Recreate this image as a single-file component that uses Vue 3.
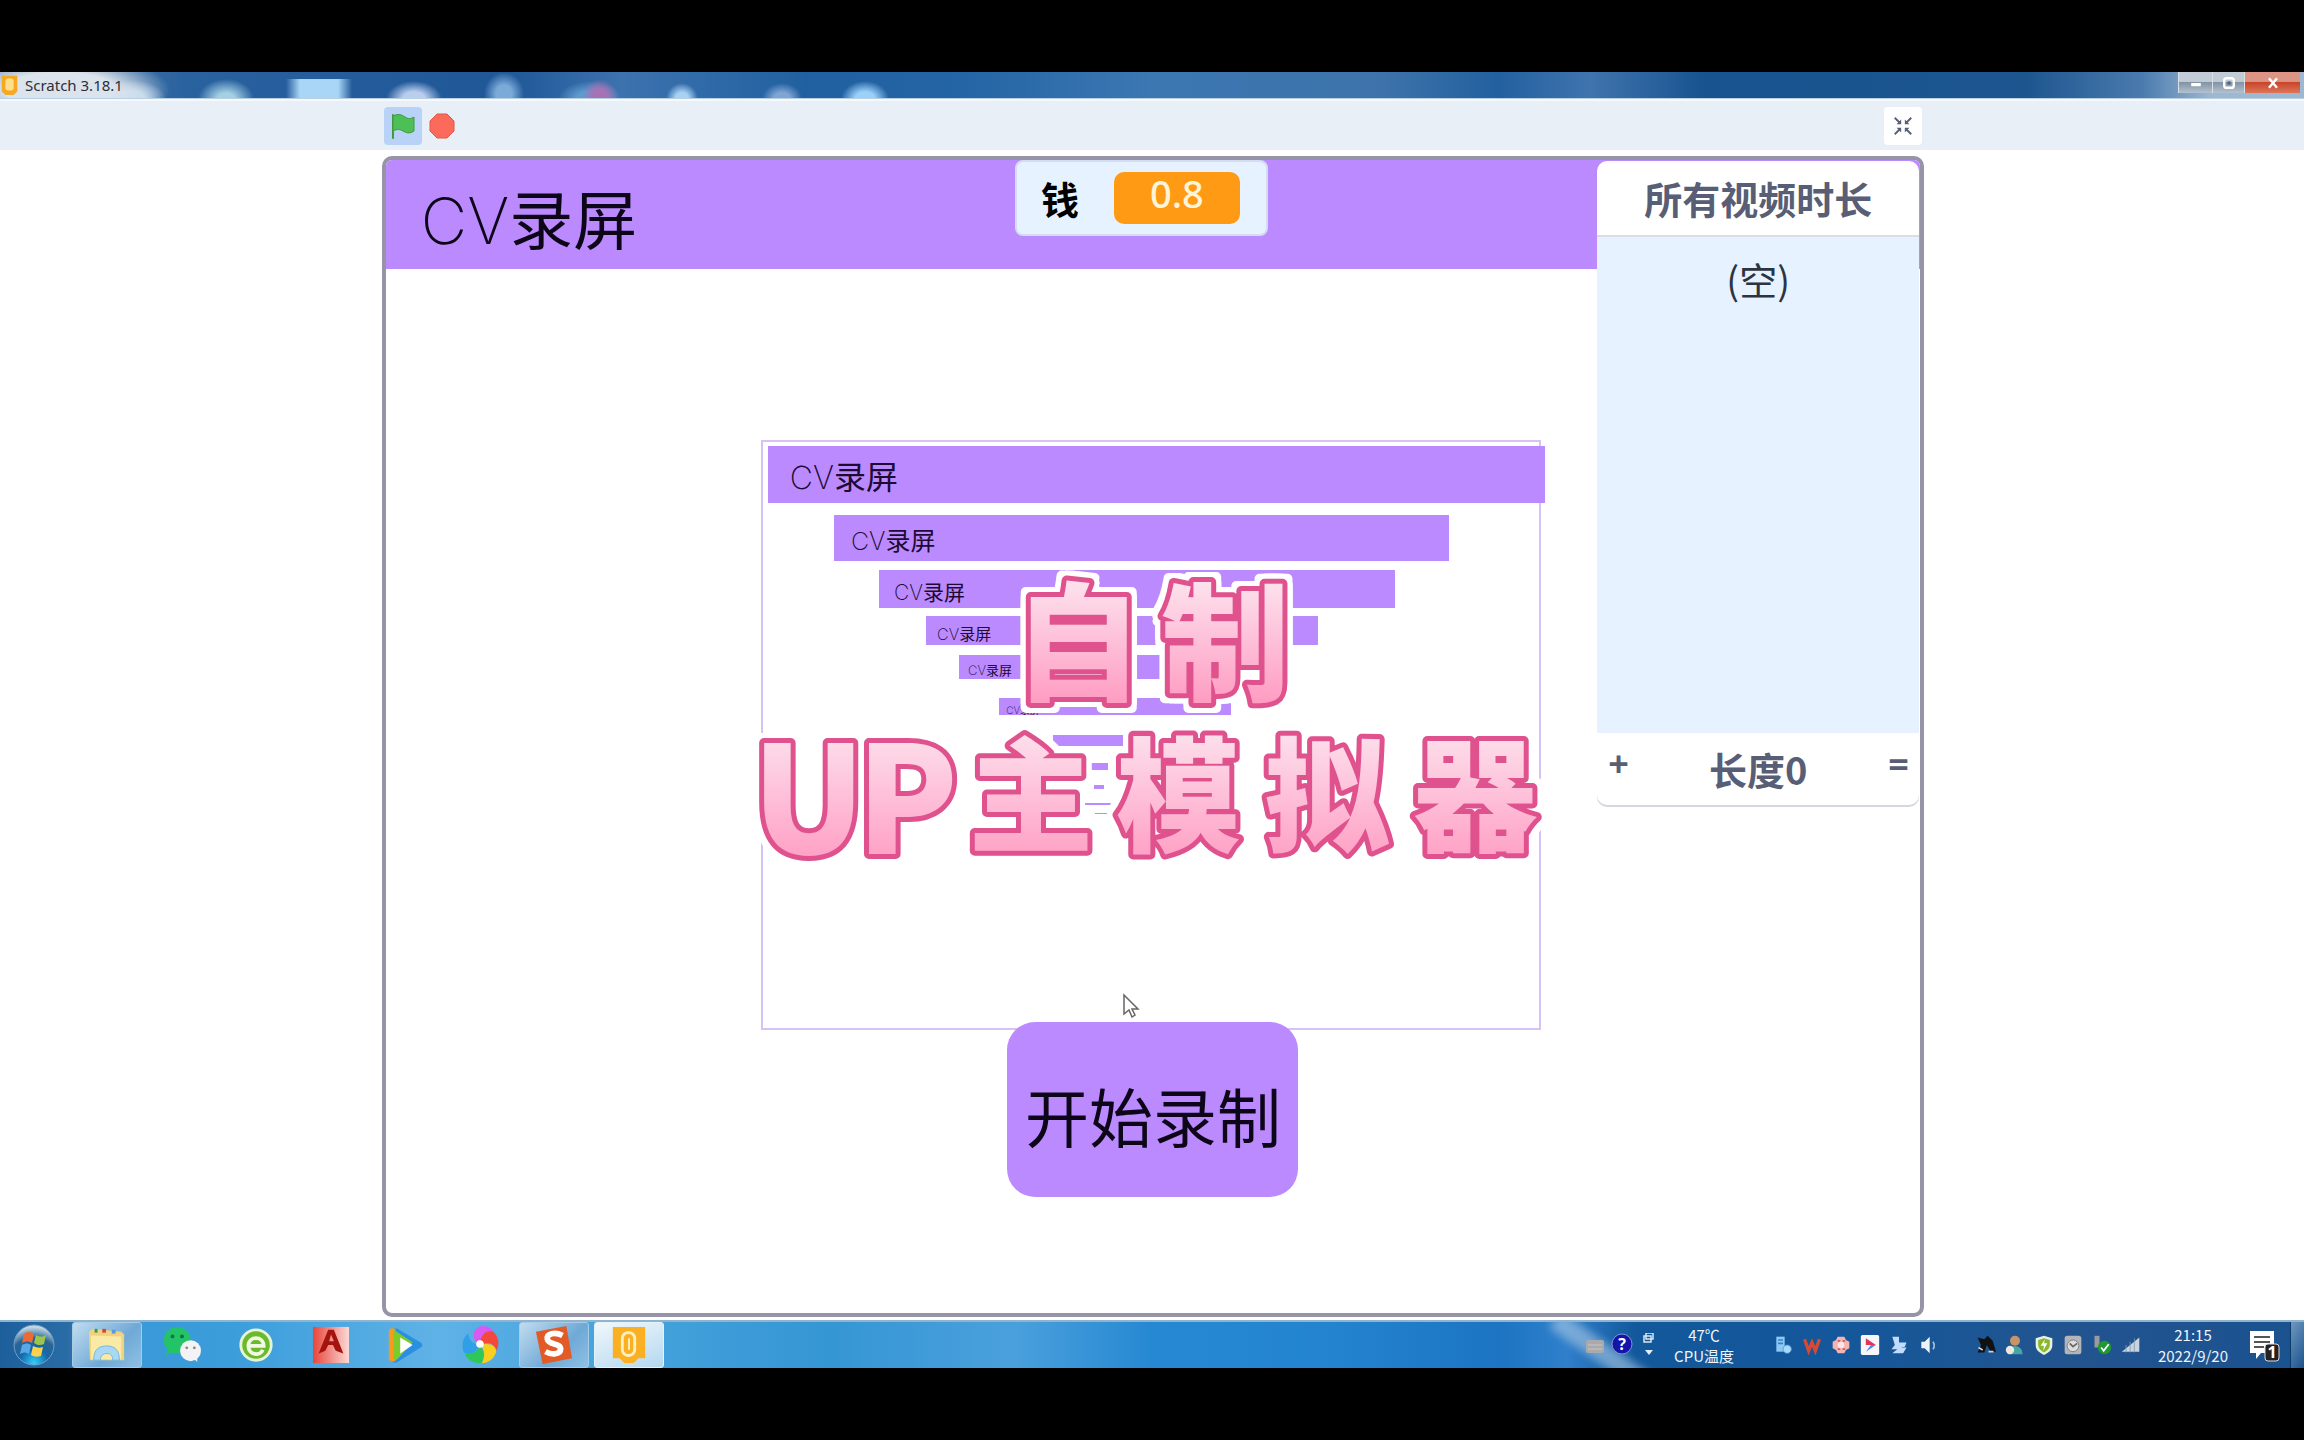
<script setup>
const FRAME = 775
const bars = [
  { left: 5, width: 776, gap: 4, height: 57, size: 32, pad: 22, label: true },
  { left: 71, width: 614, gap: 12, height: 46, size: 25, pad: 17, label: true },
  { left: 116, width: 515, gap: 9, height: 38, size: 21, pad: 15, label: true },
  { left: 163, width: 391, gap: 8, height: 29, size: 16, pad: 11, label: true },
  { left: 196, width: 318, gap: 10, height: 24, size: 13, pad: 9, label: true },
  { left: 236, width: 232, gap: 19, height: 17, size: 10, pad: 7, label: true },
  { left: 290, width: 72, gap: 20, height: 11 },
  { left: 327, width: 18, gap: 17, height: 7 },
  { left: 331, width: 10, gap: 15, height: 4 },
  { left: 322, width: 30, gap: 14, height: 2 },
  { left: 332, width: 12, gap: 8, height: 1 },
]
const barStyle = (b) => ({
  marginLeft: `${(b.left / FRAME) * 100}%`,
  width: `${(b.width / FRAME) * 100}%`,
  marginTop: `${b.gap}px`,
  height: `${b.height}px`,
  paddingLeft: `${b.pad || 0}px`,
  fontSize: `${b.size || 10}px`,
})
</script>

<template>
  <div class="screen">
    <header class="titlebar">
      <svg class="app-icon" viewBox="0 0 20 24"><path d="M1 2h17v17l-4 4H5l-4-4z" fill="#f7a823" /><rect x="5" y="5" width="9" height="13" rx="3" fill="#ffe08a" /></svg>
      <h1>Scratch 3.18.1</h1>
      <div class="captions">
        <button class="cap min" aria-label="Minimize"><svg viewBox="0 0 20 20"><rect x="4" y="10" width="12" height="4" fill="#fff" /></svg></button>
        <button class="cap max" aria-label="Maximize"><svg viewBox="0 0 20 20"><rect x="4" y="4" width="12" height="12" rx="3" fill="none" stroke="#fff" stroke-width="3" /><rect x="8" y="8" width="4" height="4" fill="#567" /></svg></button>
        <button class="cap close" aria-label="Close"><svg viewBox="0 0 20 20"><path d="M5 4l10 12M15 4L5 16" stroke="#fff" stroke-width="3" /></svg></button>
      </div>
    </header>

    <nav class="toolbar">
      <div class="column controls">
        <button class="flag" aria-label="Go"><svg viewBox="0 0 28 28"><path d="M4 3v23" stroke="#45993d" stroke-width="2" stroke-linecap="round" /><path d="M4 4c6-3 9-1 12 1s6 2 9 0v14c-4 3-8 2-11 0s-6-2-10 0z" fill="#4cbf56" stroke="#45993d" /></svg></button>
        <button class="stop" aria-label="Stop"><svg viewBox="0 0 26 26"><path d="M8 1h10l7 7v10l-7 7H8l-7-7V8z" fill="#fb6a5b" stroke="#e0574b" /></svg></button>
        <button class="shrink" aria-label="Exit full screen"><svg viewBox="0 0 24 24"><path d="M3 3l6 6M21 3l-6 6M3 21l6-6M21 21l-6-6" stroke="#575e75" stroke-width="2" /><path d="M10 5v5H5zM14 5v5h5zM10 19v-5H5zM14 19v-5h5z" fill="#575e75" /></svg></button>
      </div>
    </nav>

    <main class="workspace">
      <div class="column stage">
        <section class="banner"><span class="thin">CV</span>录屏</section>

        <div class="frame">
          <div v-for="(b, i) in bars" :key="i" class="bar" :style="barStyle(b)"><template v-if="b.label"><span class="thin">CV</span>录屏</template></div>
          <svg class="caption" viewBox="0 0 820 320">
            <defs>
              <linearGradient id="pink" x1="0" y1="0.2" x2="0" y2="0.9">
                <stop offset="0" stop-color="#fde3ee" />
                <stop offset="1" stop-color="#ff98c0" />
              </linearGradient>
            </defs>
            <text class="cartoon first" x="266 413" y="124">自制</text>
            <text class="cartoon"><tspan class="latin" x="5 109" y="286">UP</tspan><tspan x="221 368 516 664" y="274">主模拟器</tspan></text>
          </svg>
        </div>
        <button class="record">开始录制</button>

        <div class="monitor"><span class="name">钱</span><output class="value">0.8</output></div>

        <aside class="list">
          <h2>所有视频时长</h2>
          <div class="items">(空)</div>
          <footer><button aria-label="Add">+</button><span>长度0</span><button aria-label="Resize">=</button></footer>
        </aside>

        <svg class="pointer" viewBox="0 0 18 26"><path d="M2 2v19l5-4 3 7 3-2-3-6h6z" fill="#fff" stroke="#666" stroke-width="1.5" /></svg>
      </div>
    </main>

    <footer class="taskbar">
      <button class="start" aria-label="Start">
        <svg viewBox="0 0 44 44">
          <defs><radialGradient id="orb" cx=".5" cy=".95" r=".9"><stop offset="0" stop-color="#2fd0ff" /><stop offset=".4" stop-color="#1668a8" /><stop offset=".7" stop-color="#2a6492" /><stop offset="1" stop-color="#c2d8e6" /></radialGradient></defs>
          <circle cx="22" cy="22" r="20" fill="url(#orb)" stroke="#6f9fc4" />
          <path d="M12 11c4-3 7-2 10 0l-2 9c-4-2-6-2-10 0z" fill="#ec6a35" /><path d="M24 12c4 2 7 2 10 0l-2 9c-4 2-7 1-10-1z" fill="#9bc54d" />
          <path d="M10 22c4-2 6-2 9 0l-2 9c-3-2-6-2-9 0z" fill="#58a8e8" /><path d="M21 23c4 2 7 2 10 1l-2 9c-4 1-7 1-10-1z" fill="#ffd04a" />
        </svg>
      </button>
      <div class="tasks">
        <button class="task open" aria-label="Explorer">
          <svg viewBox="0 0 44 40"><path d="M3 6l4-3 30 3 3 3v27H4z" fill="#f0d37c" /><path d="M5 10l32 1v24H5z" fill="#fbe9a6" /><path d="M9 3h3v4H9z" fill="#3a9a4c" /><path d="M17 3h4v4h-4z" fill="#d24a3a" /><path d="M27 4h4v4h-4z" fill="#5a9ad8" /><path d="M8 36c0-12 6-15 14-15s13 4 13 15h-7c0-5-2-7-6-7s-7 2-7 7z" fill="#a8d8f4" stroke="#6ab6e4" /></svg>
        </button>
        <button class="task" aria-label="WeChat">
          <svg viewBox="0 0 44 40"><circle cx="17" cy="15" r="14" fill="#22c467" /><path d="M7 24l-2 7 7-4z" fill="#22c467" /><circle cx="12" cy="11" r="2" fill="#14713d" /><circle cx="22" cy="11" r="2" fill="#14713d" /><circle cx="31" cy="26" r="11" fill="#f3f3f5" /><path d="M34 34l4 4 0-7z" fill="#f3f3f5" /><circle cx="27" cy="23" r="1.5" fill="#888" /><circle cx="35" cy="23" r="1.5" fill="#888" /></svg>
        </button>
        <button class="task" aria-label="Browser">
          <svg viewBox="0 0 44 40"><circle cx="22" cy="20" r="16" fill="#6cb92d" stroke="#e4f5d4" stroke-width="3" /><path d="M14 21h16c0-11-16-11-16 0 0 10 13 11 15 4" fill="none" stroke="#eefbe0" stroke-width="4" /></svg>
        </button>
        <button class="task" aria-label="AutoCAD">
          <svg viewBox="0 0 44 40"><defs><linearGradient id="cad"><stop offset="0" stop-color="#e8453c" /><stop offset="1" stop-color="#fbd9d5" /></linearGradient></defs><rect x="3" y="1" width="38" height="38" fill="url(#cad)" /><path d="M9 29L19 4h6l10 25-8-3-3-6h-5l-3 6zM20 16h5l-3-7z" fill="#a3140c" fill-rule="evenodd" /></svg>
        </button>
        <button class="task" aria-label="Player">
          <svg viewBox="0 0 44 40"><path d="M8 6c0-4 3-4 6-3l24 14c3 2 3 4 0 6L14 38c-4 2-6 0-6-4z" fill="#2a8fe0" /><path d="M5 5c1-3 4-3 7-2v34c-4 1-6 0-7-3z" fill="#f79a1e" /><path d="M10 4l20 13-16 18c-2 2-4 0-4-3z" fill="#7ccb2a" /><path d="M17 12l13 8-13 9z" fill="#fff" /></svg>
        </button>
        <button class="task" aria-label="Video">
          <svg viewBox="0 0 44 40"><path d="M22 20C12 14 14 2 24 0c7 0 11 3 12 6-8 0-13 5-14 14z" fill="#d85af0" /><path d="M22 20c0-12 8-16 14-14 6 5 7 14 3 20-2-8-9-10-17-6z" fill="#f5483c" /><path d="M22 20c11-3 17 1 17 7-2 8-9 12-15 12 4-8 3-14-2-19z" fill="#f8cf1c" /><path d="M22 20c5 8 5 14 1 19-8 1-15-4-17-10 8 1 14-2 16-9z" fill="#2fc65a" /><path d="M22 20c-4 9-11 11-17 8-3-8-1-16 5-20 0 7 4 11 12 12z" fill="#2f9fe8" /><circle cx="22" cy="19" r="4" fill="#fff" /></svg>
        </button>
        <button class="task open" aria-label="Sogou">
          <svg viewBox="0 0 44 40"><path d="M3 6l32-6 6 34-31 6z" fill="#e25a26" /><path d="M31 10c-8-4-17-2-16 4s14 4 14 10-9 7-16 3" fill="none" stroke="#fff" stroke-width="6" /></svg>
        </button>
        <button class="task active" aria-label="Scratch">
          <svg viewBox="0 0 44 40"><path d="M5 1h34v33h-7l-5 5H17l-5-5H5z" fill="#fbb024" /><rect x="15" y="7" width="13" height="24" rx="6" fill="none" stroke="#fff0c0" stroke-width="3" /><path d="M22 13v12" stroke="#fff0c0" stroke-width="2" /></svg>
        </button>
      </div>

      <div class="lang">
        <svg viewBox="0 0 24 24"><rect x="3" y="7" width="18" height="13" rx="2" fill="#aaa9ab" /><path d="M5 12h14M5 16h14" stroke="#c6c6c8" /></svg>
        <svg viewBox="0 0 24 24"><circle cx="12" cy="11" r="10" fill="#1414a8" stroke="#8090d8" /><text x="12" y="17" text-anchor="middle" class="glyph">?</text></svg>
        <svg viewBox="0 0 24 24"><path d="M9 0h7v6H9zM7 3h7v6H7z" fill="none" stroke="#d7e6f2" stroke-width="1.5" /><path d="M8 17h8l-4 5z" fill="#e3eef6" /></svg>
      </div>
      <div class="readout temp"><span>47℃</span><span>CPU温度</span></div>
      <div class="tray">
        <svg viewBox="0 0 24 24"><path d="M4 2h10v18H4z" fill="#8ec9f5" /><path d="M6 6h6M6 10h6" stroke="#3b82c4" stroke-width="2" /><circle cx="17" cy="17" r="5" fill="#a8d8fa" stroke="#4c91cf" /></svg>
        <svg viewBox="0 0 24 24"><path d="M3 5l5 14 4-10 4 10 5-14" fill="none" stroke="#d44a34" stroke-width="4" /></svg>
        <svg viewBox="0 0 24 24"><path d="M8 2h8l2 4 4 2v8l-4 2-2 4H8l-2-4-4-2V8l4-2z" fill="#f3b4b4" /><circle cx="12" cy="12" r="4" fill="#fbe5e5" /><path d="M8 7h3M14 7h3M8 17h3M14 17h3" stroke="#d65b60" stroke-width="2" /></svg>
        <svg viewBox="0 0 24 24"><rect x="1" y="0" width="22" height="24" rx="2" fill="#f7f7fb" /><path d="M7 4l12 8H7z" fill="#e2335b" /><path d="M7 20l12-8h-6z" fill="#4689e4" /></svg>
        <svg viewBox="0 0 24 24"><path d="M4 2h8v7h9l-2 5-5 1h7l-4 7H4l6-5H3l4-5z" fill="#bfdcff" /></svg>
        <svg viewBox="0 0 24 24"><path d="M4 8h4l6-6v20l-6-6H4z" fill="#eef3f8" /><path d="M18 8c2 3 2 6 0 9" stroke="#a9c3da" stroke-width="2" fill="none" /></svg>
      </div>
      <div class="tray">
        <svg viewBox="0 0 24 24"><path d="M2 3l8 2 4-4 6 6 4 13h-6l-5-8-3 9H2l4-9z" fill="#111" /><path d="M3 15l5 3M15 20h6" stroke="#c8d4df" stroke-width="2" /></svg>
        <svg viewBox="0 0 24 24"><circle cx="12" cy="7" r="6" fill="#c89465" /><path d="M3 23c0-13 18-13 18 0z" fill="#4aa6a4" /><circle cx="6" cy="18" r="5" fill="#ece8df" /></svg>
        <svg viewBox="0 0 24 24"><path d="M12 1l10 3v8c0 6-4 9-10 12C6 21 2 18 2 12V4z" fill="#eaf0e2" /><path d="M12 4l7 2v6c0 4-3 7-7 9-4-2-7-5-7-9V6z" fill="#86b92b" /><path d="M13 5l-5 8h4l-1 6 5-9h-4z" fill="#fff" /></svg>
        <svg viewBox="0 0 24 24"><rect x="2" y="1" width="20" height="22" rx="3" fill="#b4b5b9" /><circle cx="12" cy="13" r="7" fill="#ddd" stroke="#777" /><path d="M8 10l4 4 5-4" stroke="#666" stroke-width="2" fill="none" /></svg>
        <svg viewBox="0 0 24 24"><path d="M3 1h6v14H3z" fill="#9a9ba1" /><circle cx="15" cy="15" r="8" fill="#1f9a32" /><path d="M11 15l3 4 6-8" stroke="#fff" stroke-width="2" fill="none" /></svg>
        <svg viewBox="0 0 24 24"><path d="M1 20L22 3v17z" fill="#c9d4dc" /><path d="M6 12v9M11 8v13M16 4v17" stroke="#7f9ab5" /></svg>
      </div>
      <div class="readout clock"><time>21:15</time><time>2022/9/20</time></div>
      <svg class="notice" viewBox="0 0 32 34"><path d="M1 3h24v22H12l-5 6v-6H1z" fill="#fff" /><path d="M5 9h16M5 14h16M5 19h10" stroke="#555" stroke-width="2" /><rect x="16" y="16" width="14" height="17" rx="3" fill="#222" stroke="#ddd" /><text x="23" y="30" text-anchor="middle" class="glyph">1</text></svg>
      <div class="desktop"></div>
    </footer>
  </div>
</template>

<style>
body {
  margin: 0;
  background: #000;
}
</style>

<style scoped>
.screen {
  box-sizing: border-box;
  min-height: 100vh;
  padding: 72px 0;
  display: flex;
  flex-direction: column;
  background: #000;
  font-family: "Noto Sans", "Noto Sans CJK SC", sans-serif;
}
button {
  border: 0;
  padding: 0;
  background: none;
  font: inherit;
  color: inherit;
}
svg {
  display: block;
}
.titlebar {
  box-sizing: border-box;
  height: 27px;
  display: flex;
  align-items: center;
  overflow: hidden;
  border-bottom: 1px solid #b9cfe2;
  background:
    radial-gradient(ellipse 110px 36px at 60px 18px, #dbe3ec 50%, transparent 100%),
    radial-gradient(ellipse 36px 18px at 130px 26px, #b9d6ec 40%, transparent 100%),
    radial-gradient(ellipse 28px 20px at 226px 27px, #a4d0e4 30%, transparent 100%),
    linear-gradient(90deg, transparent 286px, #a9d6f6 300px, #a9d6f6 338px, transparent 352px) 0 7px no-repeat,
    radial-gradient(ellipse 28px 18px at 414px 27px, #b9cdee 40%, transparent 100%),
    radial-gradient(ellipse 20px 22px at 504px 22px, #7ba9d8 40%, transparent 100%),
    radial-gradient(ellipse 18px 18px at 600px 25px, #a572b6 40%, transparent 100%),
    radial-gradient(ellipse 32px 18px at 590px 27px, #5e9cd0 40%, transparent 100%),
    radial-gradient(ellipse 16px 16px at 682px 27px, #a8d2f4 40%, transparent 100%),
    radial-gradient(ellipse 20px 16px at 782px 27px, #7fa5d2 40%, transparent 100%),
    radial-gradient(ellipse 24px 18px at 865px 27px, #9bd0fa 40%, transparent 100%),
    linear-gradient(90deg, #5f87ab 0, #2a62a0 8%, #1f5797 22%, #3c72ae 27%, #2160a0 35%, #2465a5 42%, #3c77b2 50%, #3d73aa 60%, #23609f 65%, #3f74ae 69%, #18538f 74%, #1d568f 88%, #4b7bae 93%, #9db8d2 96%);
}
.app-icon {
  width: 20px;
  height: 22px;
}
.titlebar h1 {
  flex: 1;
  margin: 0 0 0 5px;
  font-size: 15px;
  font-weight: 400;
  line-height: 20px;
  color: #2b2f38;
}
.captions {
  align-self: flex-start;
  display: flex;
  height: 21px;
  margin-right: 4px;
}
.cap {
  display: grid;
  place-items: center;
  background: linear-gradient(#c2ccd6 45%, #8494a5 50%, #b4c2cf);
  border-left: 1px solid #d9e0e8;
}
.cap svg {
  width: 16px;
  height: 16px;
}
.min {
  width: 34px;
}
.max {
  width: 32px;
}
.close {
  width: 56px;
  background: linear-gradient(#dc9585 45%, #c8452a 50%, #de7659);
}
.toolbar {
  height: 51px;
  border-top: 2px solid #f5f8fd;
  box-sizing: border-box;
  background: #e9eff6;
}
.column {
  box-sizing: border-box;
  width: 67%;
  margin: 0 auto;
}
.controls {
  display: flex;
  align-items: flex-start;
  gap: 7px;
  padding: 6px 2px 0 4px;
}
.flag,
.stop,
.shrink {
  display: grid;
  place-items: center;
  height: 38px;
  border-radius: 4px;
}
.flag {
  width: 38px;
  background: #b9d3f8;
}
.flag svg {
  width: 28px;
  height: 28px;
}
.stop svg {
  width: 26px;
  height: 26px;
}
.shrink {
  width: 38px;
  margin-left: auto;
  background: #fff;
}
.shrink svg {
  width: 22px;
  height: 22px;
}
.workspace {
  flex: 1;
  display: flex;
  padding: 6px 0 3px 2px;
  background: #fff;
}
.stage {
  position: relative;
  border: 4px solid #9694a6;
  border-radius: 10px;
}
.banner {
  height: 109px;
  padding-left: 35px;
  border-radius: 6px 6px 0 0;
  background: #bc8aff;
  color: #0d0518;
  font: 400 64px/122px Inter, "Noto Sans CJK SC", sans-serif;
}
.thin {
  font-weight: 200;
}
.frame {
  position: relative;
  box-sizing: border-box;
  width: 51%;
  max-width: 780px;
  height: 590px;
  margin: 171px 0 0 375px;
  border: 2px solid #d6c3f4;
}
.bar {
  box-sizing: border-box;
  display: flex;
  align-items: center;
  padding-top: 6px;
  background: #bc8aff;
  color: #1d0b35;
  font-family: Inter, "Noto Sans CJK SC", sans-serif;
  line-height: 1;
  white-space: nowrap;
}
.bar:nth-child(n + 7) {
  padding: 0;
}
.caption {
  position: absolute;
  top: 125px;
  left: -2%;
  width: 106%;
}
.cartoon {
  font: 900 124px "Noto Sans CJK SC", sans-serif;
  fill: url(#pink);
  stroke: #e0528d;
  stroke-width: 10px;
  stroke-linejoin: round;
  paint-order: stroke;
  filter: drop-shadow(5px 0 0 #fff) drop-shadow(-5px 0 0 #fff) drop-shadow(0 5px 0 #fff) drop-shadow(0 -5px 0 #fff);
}
.first {
  font-size: 128px;
}
.latin {
  font-size: 148px;
}
.record {
  display: block;
  position: relative;
  width: 291px;
  height: 175px;
  margin: -8px auto 0;
  padding-top: 8px;
  border-radius: 28px;
  background: #bc8aff;
  color: #0d0518;
  font: 400 64px/96px "Noto Sans CJK SC", sans-serif;
}
.monitor {
  position: absolute;
  top: 0;
  left: 41%;
  box-sizing: border-box;
  width: 253px;
  height: 76px;
  padding: 0 26px 0 24px;
  display: flex;
  align-items: center;
  justify-content: space-between;
  border: 2px solid #d3dcf0;
  border-radius: 8px;
  background: #e6f2ff;
}
.name {
  font: 700 38px/48px "Noto Sans CJK SC", sans-serif;
}
.value {
  width: 126px;
  height: 52px;
  border-radius: 10px;
  background: #ff9a14;
  color: #fff4d6;
  text-align: center;
  font: 500 38px/42px "Noto Sans", sans-serif;
}
.list {
  position: absolute;
  top: 1px;
  right: 1px;
  width: 322px;
  border-radius: 10px;
  background: #fff;
  box-shadow: 0 2px 0 #d4d7de;
  color: #575e75;
  text-align: center;
  font-family: "Noto Sans CJK SC", sans-serif;
}
.list h2 {
  margin: 0;
  border-bottom: 2px solid #d9dee6;
  font-size: 38px;
  font-weight: 700;
  line-height: 74px;
}
.items {
  box-sizing: border-box;
  height: 496px;
  padding-top: 18px;
  background: #e6f2ff;
  color: #2b3440;
  font-size: 38px;
  line-height: 48px;
}
.list footer {
  display: flex;
  align-items: flex-start;
  justify-content: space-between;
  padding: 0 11px;
  font-size: 38px;
  font-weight: 700;
  line-height: 72px;
}
.list footer button {
  width: 20px;
  display: grid;
  place-items: center;
  font: 700 36px/62px "Noto Sans", sans-serif;
}
.pointer {
  position: absolute;
  top: 833px;
  left: 48%;
  width: 18px;
  height: 26px;
}
.taskbar {
  position: relative;
  height: 48px;
  box-sizing: border-box;
  border-top: 2px solid #8fb4d0;
  display: flex;
  align-items: center;
  overflow: hidden;
  background: linear-gradient(90deg, #1c5f9b 0, #2a6ca6 3%, #3a97d6 4%, #3b9ddb 10%, #5fb2e6 19%, #49a5dd 25%, #3596d4 36%, #4aa0dc 44%, #2688d2 50%, #2383cf 58%, #1c74c2 65%, #2f7fcb 68%, #12589b 71%, #14579a 80%, #22548f 90%, #1a528f);
}
.taskbar::before {
  content: "";
  position: absolute;
  left: 69%;
  top: -26px;
  width: 20px;
  height: 110px;
  background: #a9c8e4;
  opacity: 0.6;
  filter: blur(4px);
  transform: rotate(-55deg);
}
.start {
  width: 68px;
  margin-right: 4px;
  display: grid;
  place-items: center;
}
.start svg {
  width: 44px;
  height: 44px;
}
.tasks {
  display: flex;
  width: 592px;
  justify-content: space-between;
}
.task {
  box-sizing: border-box;
  width: 70px;
  height: 46px;
  display: grid;
  place-items: center;
  border-radius: 3px;
}
.task svg {
  width: 42px;
  height: 38px;
}
.open {
  border: 1px solid #a8cbe6;
  background: linear-gradient(135deg, #c2dcf0, #6fa9d6 60%, #8ec0e4);
}
.active {
  border: 1px solid #e6f2fa;
  background: linear-gradient(160deg, #f0f7fc, #b5d8f0);
}
.lang,
.tray {
  position: relative;
  display: flex;
}
.lang {
  margin-left: auto;
  margin-right: 13px;
  gap: 3px;
}
.tray {
  margin-right: 36px;
  gap: 7px;
}
.lang svg {
  width: 24px;
  height: 24px;
}
.tray svg {
  width: 22px;
  height: 20px;
}
.glyph {
  fill: #fff;
  font: 700 16px "Noto Sans", sans-serif;
}
.readout {
  display: flex;
  flex-direction: column;
  align-items: center;
  color: #eef5fb;
  font: 400 15px/21px "Noto Sans CJK SC", sans-serif;
}
.temp {
  position: relative;
  margin-right: 38px;
}
.tray + .tray {
  margin-right: 13px;
}
.clock {
  width: 76px;
}
.notice {
  width: 32px;
  height: 34px;
  margin: 0 9px 0 18px;
}
.desktop {
  align-self: stretch;
  width: 13px;
  border-left: 1px solid #0d3a68;
  background: linear-gradient(120deg, #6d97bf, #1d548d);
}
</style>
